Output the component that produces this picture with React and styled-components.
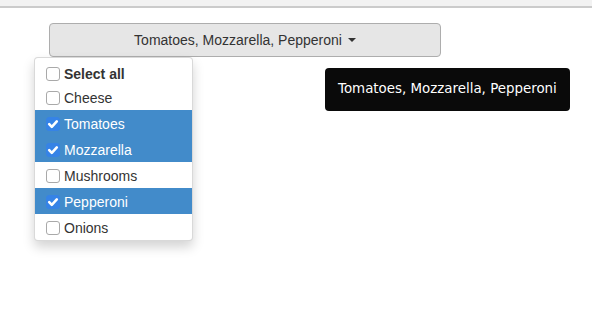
import React, { useState } from "react";
import styled, { createGlobalStyle } from "styled-components";

const GlobalStyle = createGlobalStyle`
  html, body, #root {
    height: 100%;
  }
  body {
    margin: 0;
    background: #fff;
    font-family: "Liberation Sans", Arial, sans-serif;
  }
`;

const options = [
  { label: "Cheese", checked: false },
  { label: "Tomatoes", checked: true },
  { label: "Mozzarella", checked: true },
  { label: "Mushrooms", checked: false },
  { label: "Pepperoni", checked: true },
  { label: "Onions", checked: false },
];

function Check({ checked }) {
  return (
    <Box $checked={checked}>
      {checked && (
        <svg width="12" height="12" viewBox="0 0 12 12">
          <path
            d="M2.2 6.2 L4.8 8.8 L9.8 3.4"
            fill="none"
            stroke="#fff"
            strokeWidth="2.6"
            strokeLinecap="round"
            strokeLinejoin="round"
          />
        </svg>
      )}
    </Box>
  );
}

function App() {
  const [items] = useState(options);
  const selected = items.filter((i) => i.checked).map((i) => i.label).join(", ");

  return (
    <Screen>
      <GlobalStyle />
      <TopBar />
      <Page>
        <Wrapper>
          <Toggle>
            {selected} <Caret />
          </Toggle>
          <Menu>
            <Row $header>
              <Check checked={false} />
              <Label $bold>Select all</Label>
            </Row>
            {items.map((item) => (
              <Row key={item.label} $active={item.checked}>
                <Check checked={item.checked} />
                <Label>{item.label}</Label>
              </Row>
            ))}
          </Menu>
          <Tooltip>{selected}</Tooltip>
        </Wrapper>
      </Page>
    </Screen>
  );
}

export default App;

const Screen = styled.div`
  min-height: 312px;
  position: relative;
`;

const TopBar = styled.div`
  height: 6px;
  background: #f2f2f2;
  border-bottom: 2px solid #cbcbcb;
`;

const Page = styled.div`
  padding: 15px 0 0 49px;
`;

const Wrapper = styled.div`
  position: relative;
  width: 392px;
`;

const Toggle = styled.button`
  width: 392px;
  height: 34px;
  box-sizing: border-box;
  background: #e6e6e6;
  border: 1px solid #adadad;
  border-radius: 4px;
  color: #333;
  font-family: "Liberation Sans", Arial, sans-serif;
  font-size: 14px;
  text-align: center;
  padding: 0 12px 1px;
  display: flex;
  align-items: center;
  justify-content: center;
  gap: 4px;
`;

const Caret = styled.span`
  display: inline-block;
  width: 0;
  height: 0;
  margin-left: 2px;
  border-top: 4px solid #333;
  border-left: 4px solid transparent;
  border-right: 4px solid transparent;
`;

const Menu = styled.div`
  position: absolute;
  z-index: 2;
  left: -15px;
  top: 34px;
  width: 159px;
  box-sizing: border-box;
  background: #fff;
  border: 1px solid rgba(0, 0, 0, 0.15);
  border-radius: 4px;
  box-shadow: 0 6px 12px rgba(0, 0, 0, 0.175);
  overflow: hidden;
`;

const Row = styled.div`
  height: 26px;
  box-sizing: border-box;
  display: flex;
  align-items: center;
  padding: ${(p) => (p.$header ? "6px 0 0 11px" : "2px 0 0 11px")};
  gap: 4px;
  background: ${(p) => (p.$active ? "#428bca" : "transparent")};
  color: ${(p) => (p.$active ? "#fff" : "#333")};
`;

const Box = styled.span`
  flex-shrink: 0;
  width: 14px;
  height: 14px;
  box-sizing: border-box;
  border-radius: 3px;
  display: flex;
  align-items: center;
  justify-content: center;
  background: ${(p) => (p.$checked ? "#3683e6" : "#fff")};
  border: 1px solid ${(p) => (p.$checked ? "#3683e6" : "#a9a9a9")};
`;

const Label = styled.span`
  font-size: 14px;
  font-weight: ${(p) => (p.$bold ? 700 : 400)};
`;

const Tooltip = styled.div`
  position: absolute;
  z-index: 3;
  left: 276px;
  top: 45px;
  background: #0a0a0a;
  color: #fff;
  border-radius: 4px;
  padding: 12px 13px 13px;
  font-family: "DejaVu Sans", sans-serif;
  font-size: 13.4px;
  line-height: 18px;
  white-space: nowrap;
`;
